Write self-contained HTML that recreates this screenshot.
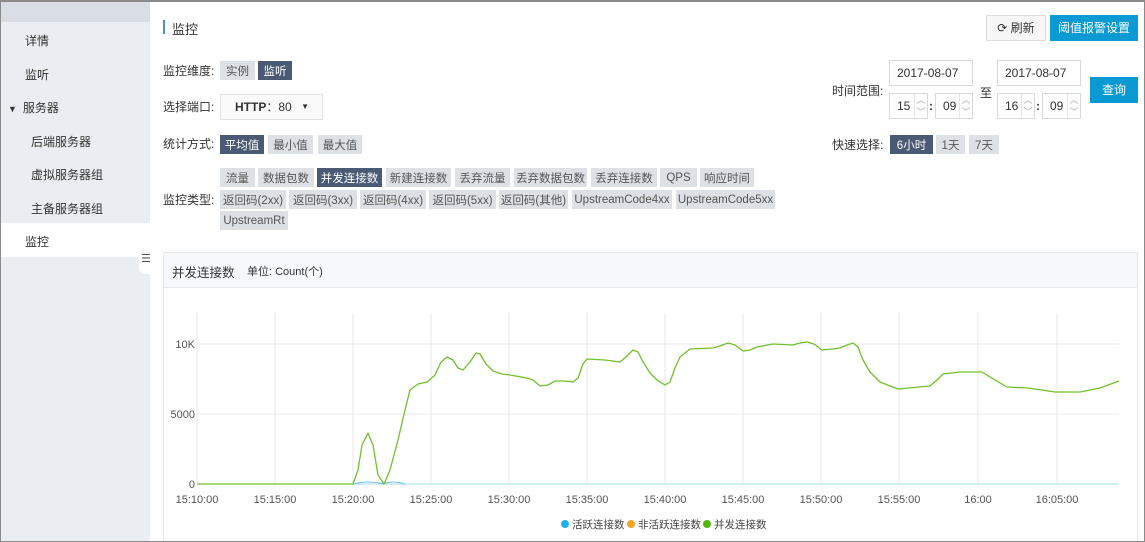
<!DOCTYPE html>
<html><head><meta charset="utf-8"><style>
*{box-sizing:border-box;margin:0;padding:0}
html,body{width:1145px;height:542px;overflow:hidden}
body{background:#fff;font-family:"Liberation Sans","Noto Sans CJK SC",sans-serif;font-size:12px;color:#333;position:relative}
.frame{position:absolute;left:0;top:0;width:1145px;height:542px;border:1px solid #8a8a8a;border-top:2px solid #8a8a8a;pointer-events:none;z-index:10}
.side{position:absolute;left:0;top:0;width:150px;height:542px;background:#eaedf1}
.side .top{height:22px;background:#d9dee4}
.si{position:absolute;left:25px;font-size:12px;color:#333}
.a{position:absolute}
.lbl{position:absolute;left:163px;font-size:12px;color:#333}
.b{position:absolute;height:19px;display:flex;align-items:center;justify-content:center;background:#dde1e6;color:#555;font-size:11.5px;white-space:nowrap}
.b.d{background:#4a5a75;color:#fff}
.inp{position:absolute;border:1px solid #d9d9d9;background:#fff;height:26px;display:flex;align-items:center;padding-left:7px;font-size:12px;color:#333}
.sp{position:absolute;right:0;top:0;width:13px;height:24px;border-left:1px solid #e5e5e5;font-size:9px;color:#aaa;line-height:12px;text-align:center}
</style></head><body>
<div class="side"><div class="top"></div>
<div class="si" style="top:32px">详情</div>
<div class="si" style="top:66px">监听</div>
<div class="si" style="top:99px;left:8px"><span style="font-size:9px;margin-right:6px">▼</span>服务器</div>
<div class="si" style="top:133px;left:31px">后端服务器</div>
<div class="si" style="top:166px;left:31px">虚拟服务器组</div>
<div class="si" style="top:200px;left:31px">主备服务器组</div>
<div style="position:absolute;left:0;top:223px;width:150px;height:34px;background:#fff"></div>
<div class="si" style="top:233px">监控</div>
<div style="position:absolute;left:139px;top:244px;width:11px;height:30px;background:#fff;border-radius:6px 0 0 6px"></div>
<div style="position:absolute;left:141px;top:252px;font-size:11px;color:#555">☰</div>
</div>
<div class="a" style="left:163px;top:20px;width:2px;height:14px;background:#4a90d9"></div>
<div class="a" style="left:172px;top:19px;font-size:13px;color:#333">监控</div>

<div class="lbl" style="top:62px">监控维度:</div>
<div class="b" style="left:220px;top:61px;width:35px">实例</div>
<div class="b d" style="left:258px;top:61px;width:34px">监听</div>
<div class="lbl" style="top:98px">选择端口:</div>
<div class="a" style="left:220px;top:94px;width:103px;height:26px;border:1px solid #e3e3e3;background:#fafafa;line-height:24px;padding-left:14px;font-size:12px"><b>HTTP</b>：80<span style="position:absolute;right:13px;font-size:8px">▼</span></div>
<div class="lbl" style="top:135px">统计方式:</div>
<div class="b d" style="left:220px;top:135px;width:44px">平均值</div>
<div class="b" style="left:268px;top:135px;width:45px">最小值</div>
<div class="b" style="left:318px;top:135px;width:44px">最大值</div>
<div class="lbl" style="top:191px">监控类型:</div>
<div class="b" style="left:220px;top:168px;width:35px">流量</div>
<div class="b" style="left:258px;top:168px;width:56px">数据包数</div>
<div class="b d" style="left:317px;top:168px;width:65px">并发连接数</div>
<div class="b" style="left:386px;top:168px;width:65px">新建连接数</div>
<div class="b" style="left:455px;top:168px;width:55px">丢弃流量</div>
<div class="b" style="left:514px;top:168px;width:73px">丢弃数据包数</div>
<div class="b" style="left:591px;top:168px;width:66px">丢弃连接数</div>
<div class="b" style="left:660px;top:168px;width:37px">QPS</div>
<div class="b" style="left:700px;top:168px;width:54px">响应时间</div>
<div class="b" style="left:220px;top:190px;width:66px">返回码(2xx)</div>
<div class="b" style="left:289px;top:190px;width:68px">返回码(3xx)</div>
<div class="b" style="left:360px;top:190px;width:66px">返回码(4xx)</div>
<div class="b" style="left:429px;top:190px;width:67px">返回码(5xx)</div>
<div class="b" style="left:499px;top:190px;width:69px">返回码(其他)</div>
<div class="b" style="left:572px;top:190px;width:100px">UpstreamCode4xx</div>
<div class="b" style="left:676px;top:190px;width:99px">UpstreamCode5xx</div>
<div class="b" style="left:220px;top:211px;width:68px">UpstreamRt</div>

<div class="a" style="left:986px;top:15px;width:60px;height:26px;border:1px solid #ddd;background:#f7f7f7;line-height:24px;text-align:center;font-size:12px">⟳ 刷新</div>
<div class="a" style="left:1050px;top:15px;width:88px;height:26px;background:#0a9ad3;color:#fff;line-height:26px;text-align:center;font-size:12px">阈值报警设置</div>
<div class="a" style="left:832px;top:82px">时间范围:</div>
<div class="inp" style="left:889px;top:60px;width:84px">2017-08-07</div>
<div class="inp" style="left:997px;top:60px;width:84px">2017-08-07</div>
<div class="inp" style="left:889px;top:93px;width:39px">15<div class="sp">︿<br>﹀</div></div>
<div class="a" style="left:929px;top:99px;font-weight:bold">:</div>
<div class="inp" style="left:935px;top:93px;width:38px">09<div class="sp">︿<br>﹀</div></div>
<div class="a" style="left:980px;top:84px">至</div>
<div class="inp" style="left:997px;top:93px;width:38px">16<div class="sp">︿<br>﹀</div></div>
<div class="a" style="left:1036px;top:99px;font-weight:bold">:</div>
<div class="inp" style="left:1042px;top:93px;width:39px">09<div class="sp">︿<br>﹀</div></div>
<div class="a" style="left:1090px;top:77px;width:48px;height:26px;background:#0a9ad3;color:#fff;line-height:26px;text-align:center">查询</div>
<div class="a" style="left:832px;top:136px">快速选择:</div>
<div class="b d" style="left:890px;top:135px;width:43px">6小时</div>
<div class="b" style="left:936px;top:135px;width:29px">1天</div>
<div class="b" style="left:969px;top:135px;width:30px">7天</div>

<div class="a" style="left:163px;top:252px;width:975px;height:290px;border:1px solid #e3e6eb;border-bottom:none"></div>
<div class="a" style="left:164px;top:253px;width:973px;height:35px;background:#f7f8fa;border-bottom:1px solid #e6e8ec"></div>
<div class="a" style="left:172px;top:262px;font-size:12.5px">并发连接数</div>
<div class="a" style="left:247px;top:263px;font-size:11px">单位: Count(个)</div>

<svg class="a" style="left:0;top:0" width="1145" height="542">
<g stroke="#e8e8ec" stroke-width="1">
<line x1="197" y1="313" x2="197" y2="484"/><line x1="275" y1="313" x2="275" y2="484"/><line x1="353" y1="313" x2="353" y2="484"/><line x1="431" y1="313" x2="431" y2="484"/><line x1="509" y1="313" x2="509" y2="484"/><line x1="587" y1="313" x2="587" y2="484"/><line x1="665" y1="313" x2="665" y2="484"/><line x1="743" y1="313" x2="743" y2="484"/><line x1="821" y1="313" x2="821" y2="484"/><line x1="899" y1="313" x2="899" y2="484"/><line x1="978" y1="313" x2="978" y2="484"/><line x1="1057" y1="313" x2="1057" y2="484"/>
<line x1="197" y1="344" x2="1119" y2="344"/><line x1="197" y1="414" x2="1119" y2="414"/>
</g>
<line x1="197" y1="484" x2="1119" y2="484" stroke="#a8dcf0" stroke-width="1"/>
<path d="M353 484 Q368 480 384 484 Q392 480 405 484" fill="none" stroke="#6cc6f0" stroke-width="1"/>
<polyline fill="none" stroke="#72c02c" stroke-width="1.3" stroke-linejoin="round" points="197,484 353,484 358,470 362,445 368,433 373,445 378,475 384,484 390,470 398,440 405,410 410,390 418,384 427,382 435,375 441,362 447,357 453,360 458,368 463,370 470,362 476,353 480,354 486,364 493,371 502,374 510,375 527,378 533,380 540,386 548,385 555,381 565,381 573,382 578,378 583,364 587,359 605,360 620,362 626,357 633,350 638,352 642,360 650,373 657,380 665,385 670,382 675,368 680,357 690,349 713,348 720,346 728,343 735,345 743,351 750,350 757,347 773,344 793,345 800,343 807,342 814,344 822,350 832,349 840,348 847,345 853,343 858,347 863,360 870,372 880,382 898,389 930,386 936,381 943,374 960,372 982,372 995,380 1007,387 1028,388 1055,392 1080,392 1100,388 1119,381"/>
<g font-family="Liberation Sans,sans-serif" font-size="11" fill="#555" text-anchor="end">
<text x="195" y="348">10K</text><text x="195" y="418">5000</text><text x="195" y="488">0</text>
</g>
<g font-family="Liberation Sans,sans-serif" font-size="11" fill="#555" text-anchor="middle">
<text x="197" y="503">15:10:00</text><text x="275" y="503">15:15:00</text><text x="353" y="503">15:20:00</text><text x="431" y="503">15:25:00</text><text x="509" y="503">15:30:00</text><text x="587" y="503">15:35:00</text><text x="665" y="503">15:40:00</text><text x="743" y="503">15:45:00</text><text x="821" y="503">15:50:00</text><text x="899" y="503">15:55:00</text><text x="978" y="503">16:00</text><text x="1057" y="503">16:05:00</text>
</g>
<circle cx="565" cy="524" r="4" fill="#1fb1f5"/><circle cx="631" cy="524" r="4" fill="#f5a623"/><circle cx="707" cy="524" r="4" fill="#4fb80a"/>
<g font-family="Liberation Sans,Noto Sans CJK SC,sans-serif" font-size="10.5" fill="#444">
<text x="572" y="528">活跃连接数</text><text x="638" y="528">非活跃连接数</text><text x="714" y="528">并发连接数</text>
</g>
</svg>
<div class="frame"></div>
</body></html>
